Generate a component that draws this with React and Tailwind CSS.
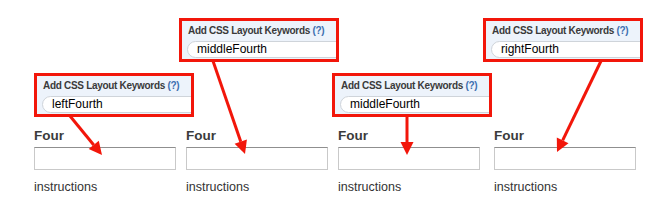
import React from 'react';

const FONT = { fontFamily: '"Liberation Sans", Arial, sans-serif' };

const callouts = [
    { value: 'leftFourth', pos: 'left-[34px] top-[73px]' },
    { value: 'middleFourth', pos: 'left-[179px] top-[18px]' },
    { value: 'middleFourth', pos: 'left-[332px] top-[73px]' },
    { value: 'rightFourth', pos: 'left-[483px] top-[18px]' },
];

const columns = [
    { ml: 'ml-[34px]' },
    { ml: 'ml-[10px]' },
    { ml: 'ml-[10px]' },
    { ml: 'ml-[14px]' },
];

function Callout({ value, pos }) {
    return (
        <div className={`absolute ${pos} w-[160px] h-[44px] border-[3px] border-[#f2160a] bg-[#edf3fb] overflow-hidden`}>
            <div className="pl-[6px] pt-[3px] text-[10px] font-bold tracking-[-0.3px] text-[#3a3a3a] leading-[13px] whitespace-nowrap">
                Add CSS Layout Keywords <span className="text-[#3c6fb0]">(?)</span>
            </div>
            <div className="ml-[5px] mt-[4px] w-[200px] h-[17px] bg-white border border-[#cfd4da] rounded-l-[9px] pl-[9px] text-[12px] text-black leading-[15px] whitespace-nowrap">
                {value}
            </div>
        </div>
    );
}

function Arrows() {
    const arrows = [
        [70, 116, 102, 155],
        [213, 61, 245, 154],
        [407, 116, 407, 155],
        [601, 61, 557, 152],
    ];
    return (
        <svg className="absolute inset-0 pointer-events-none" width="670" height="203">
            {arrows.map(([x1, y1, x2, y2], i) => {
                const dx = x2 - x1, dy = y2 - y1;
                const len = Math.hypot(dx, dy);
                const ux = dx / len, uy = dy / len;
                const hl = 13, hw = 6.5;
                const bx = x2 - ux * hl, by = y2 - uy * hl;
                const px = -uy, py = ux;
                return (
                    <g key={i}>
                        <line x1={x1} y1={y1} x2={bx} y2={by} stroke="#f2160a" strokeWidth="3" />
                        <polygon
                            points={`${x2},${y2} ${bx + px * hw},${by + py * hw} ${bx - px * hw},${by - py * hw}`}
                            fill="#f2160a"
                        />
                    </g>
                );
            })}
        </svg>
    );
}

export default function App() {
    return (
        <div className="relative w-[670px] h-[203px] bg-white overflow-hidden" style={FONT}>
            <div className="flex pt-[128px]">
                {columns.map((c, i) => (
                    <div key={i} className={`${c.ml} w-[142px]`}>
                        <div className="text-[13.5px] font-bold text-[#3b3b3b] leading-[16px]">Four</div>
                        <div className="mt-[3px] h-[23px] border border-[#c9c9c9] border-t-[#8f8f8f] bg-white" />
                        <div className="mt-[10px] text-[12.5px] text-[#333] leading-[14px]">instructions</div>
                    </div>
                ))}
            </div>
            {callouts.map((c, i) => (
                <Callout key={i} {...c} />
            ))}
            <Arrows />
        </div>
    );
}
